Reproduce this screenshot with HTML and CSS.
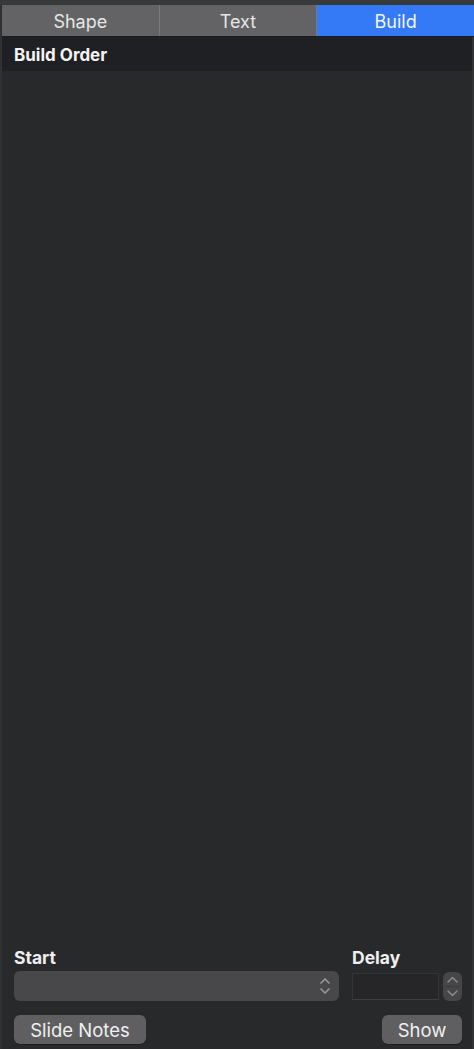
FILE: index.html
```html
<!DOCTYPE html>
<html>
<head>
<meta charset="utf-8">
<link rel="stylesheet" href="styles.css">
</head>
<body>
<div class="panel">
  <div class="topstrip"></div>
  <div class="tabs">
    <div class="tab">Shape</div>
    <div class="tab">Text</div>
    <div class="tab active">Build</div>
  </div>
  <div class="header">Build Order</div>
  <div class="list"></div>
  <div class="controls">
    <div class="labels">
      <span class="label">Start</span>
      <span class="label delay-label">Delay</span>
    </div>
    <div class="fields">
      <div class="select">
        <svg class="chev" width="12" height="20" viewBox="0 0 12 20"><path d="M2 7 L6 3 L10 7 M2 13 L6 17 L10 13" fill="none" stroke="#9a9a9c" stroke-width="1.6" stroke-linecap="round" stroke-linejoin="round"/></svg>
      </div>
      <div class="delay">
        <div class="delay-input"></div>
        <div class="stepper">
          <svg width="19" height="29" viewBox="0 0 19 29"><path d="M5 10 L9.5 5.5 L14 10" fill="none" stroke="#8a8a8c" stroke-width="1.5" stroke-linecap="round" stroke-linejoin="round"/><line x1="2" y1="14.5" x2="17" y2="14.5" stroke="#3a3a3c" stroke-width="1"/><path d="M5 19 L9.5 23.5 L14 19" fill="none" stroke="#8a8a8c" stroke-width="1.5" stroke-linecap="round" stroke-linejoin="round"/></svg>
        </div>
      </div>
    </div>
    <div class="buttons">
      <div class="btn">Slide Notes</div>
      <div class="btn show">Show</div>
    </div>
  </div>
</div>
</body>
</html>
```
FILE: styles.css
```css
* { box-sizing: border-box; }
html, body { margin: 0; padding: 0; background: #2a2b2d; }
body { font-family: Inter, "Noto Sans", "Liberation Sans", sans-serif; }
.panel {
  width: 474px;
  height: 1049px;
  display: flex;
  flex-direction: column;
  background: #28292b;
  border-left: 2px solid #303133;
  border-right: 2px solid #323335;
}
.topstrip { height: 5px; background: #38393b; margin-left: -2px; margin-right: -2px; }
.tabs {
  display: flex;
  height: 32px;
  margin-right: -2px;
  background: #646466;
  border-bottom: 1px solid #1a1b1d;
}
.tab {
  flex: 1;
  display: flex;
  align-items: center;
  justify-content: center;
  color: #e6e6e6;
  font-size: 18px;
  padding-top: 2px;
  background: #636365;
  border-right: 1px solid #79797b;
}
.tab.active { background: #3479f6; color: #f2f6ff; border-right: none; }
.header {
  height: 34px;
  background: #1f2023;
  color: #f4f4f4;
  font-weight: 700;
  font-size: 17px;
  padding-left: 12px;
  padding-top: 2px;
  display: flex;
  align-items: center;
}
.list { flex: 1; }
.controls { padding: 0 10px 5px 12px; }
.labels {
  display: flex;
  justify-content: space-between;
  height: 20px;
  align-items: center;
  padding-top: 2px;
  margin-bottom: 5px;
}
.label { color: #efefef; font-weight: 700; font-size: 17.5px; }
.delay-label { width: 110px; }
.fields { display: flex; align-items: center; gap: 13px; height: 30px; }
.select {
  flex: 1;
  height: 30px;
  background: #48484a;
  border-radius: 6px;
  display: flex;
  justify-content: flex-end;
  align-items: center;
  padding-right: 8px;
}
.delay { display: flex; align-items: center; gap: 4px; width: 110px; }
.delay-input {
  width: 87px;
  height: 27px;
  background: #262628;
  border: 1px solid #343436;
  border-bottom-color: #3e3e40;
}
.stepper {
  width: 19px;
  height: 29px;
  background: #464648;
  border-radius: 6px;
  display: flex;
}
.buttons {
  display: flex;
  justify-content: space-between;
  margin-top: 14px;
}
.btn {
  height: 29px;
  background: #5f5f61;
  color: #f0f0f0;
  font-size: 18.5px;
  border-radius: 6px;
  display: flex;
  align-items: center;
  justify-content: center;
  padding: 1px 0 0;
  width: 132px;
  box-shadow: 0 1px 0 #1c1c1e;
}
.btn.show { width: 80px; }
```
